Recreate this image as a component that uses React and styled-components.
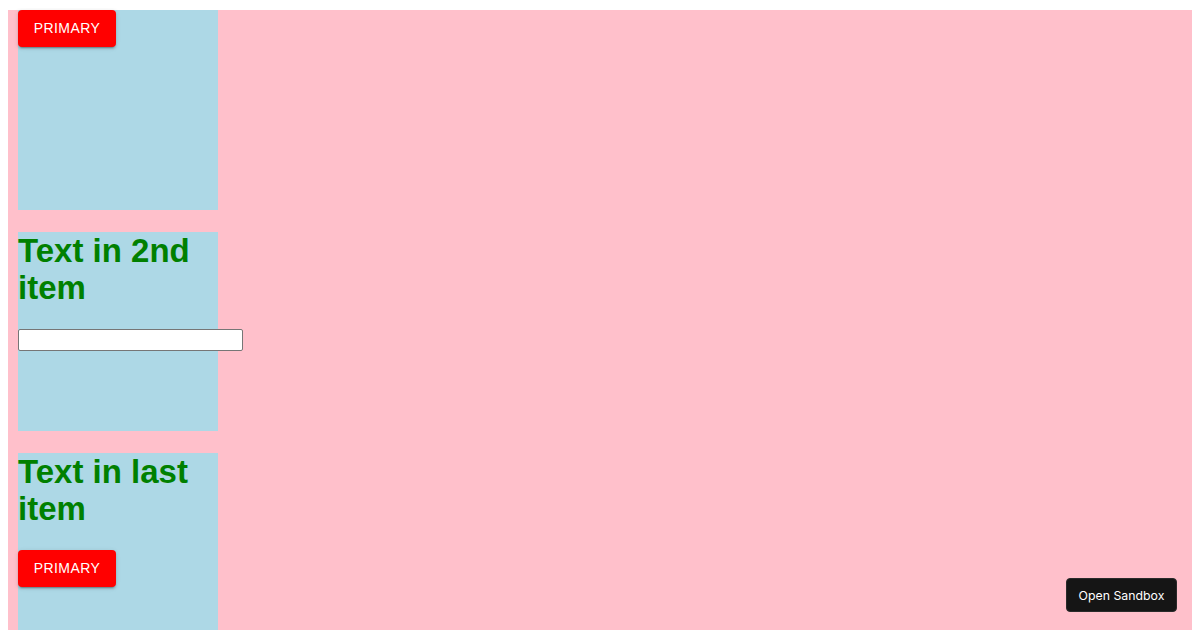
import React from "react";
import styled, { createGlobalStyle } from "styled-components";

const Global = createGlobalStyle`
  html, body { margin: 0; padding: 0; }
  body { margin: 8px; font-family: "Liberation Sans", Arial, sans-serif; overflow: hidden; }
`;

const Container = styled.div`
  margin-top: 2px;
  background: pink;
  padding: 0 10px;
  height: 700px;
  display: flex;
  flex-direction: column;
  align-items: flex-start;
  gap: 22px;
`;

const Item = styled.div`
  width: 200px;
  height: ${(p) => p.$h || 200}px;
  flex-shrink: 0;
  background: lightblue;
`;

const Heading = styled.h1`
  margin: 0 0 23px;
  color: green;
  font-family: "Liberation Sans", Arial, sans-serif;
  font-weight: 700;
  font-size: 33px;
  line-height: 37px;
`;

const Button = styled.button`
  display: inline-flex;
  align-items: center;
  justify-content: center;
  box-sizing: border-box;
  width: 98px;
  height: 37px;
  padding: 5px 16px 7px;
  border: 0;
  border-radius: 4px;
  background: red;
  color: #fff;
  font-family: "Liberation Sans", Helvetica, Arial, sans-serif;
  font-size: 14px;
  font-weight: 400;
  letter-spacing: 0.4px;
  text-transform: uppercase;
  box-shadow: 0px 3px 1px -2px rgba(0,0,0,0.2), 0px 2px 2px 0px rgba(0,0,0,0.14), 0px 1px 5px 0px rgba(0,0,0,0.12);
  cursor: pointer;
`;

const Input = styled.input`
  display: block;
  box-sizing: border-box;
  width: 225px;
  height: 22px;
  margin: 0;
  border: 1px solid #767676;
  border-radius: 2px;
  background: #fff;
  padding: 1px 2px;
  font-size: 13px;
`;

const SandboxButton = styled.button`
  position: fixed;
  right: 23px;
  bottom: 18px;
  box-sizing: border-box;
  width: 111px;
  height: 34px;
  border: 1px solid #2a2a2a;
  border-radius: 4px;
  background: #151515;
  color: #fff;
  font-family: Inter, "Liberation Sans", sans-serif;
  font-size: 12.3px;
  font-weight: 400;
  padding: 0;
  cursor: pointer;
`;

export default function App() {
  return (
    <>
      <Global />
      <Container>
        <Item>
          <Button>Primary</Button>
        </Item>
        <Item $h={199}>
          <Heading>Text in 2nd item</Heading>
          <Input type="text" />
        </Item>
        <Item>
          <Heading>Text in last item</Heading>
          <Button>Primary</Button>
        </Item>
      </Container>
      <SandboxButton>Open Sandbox</SandboxButton>
    </>
  );
}
